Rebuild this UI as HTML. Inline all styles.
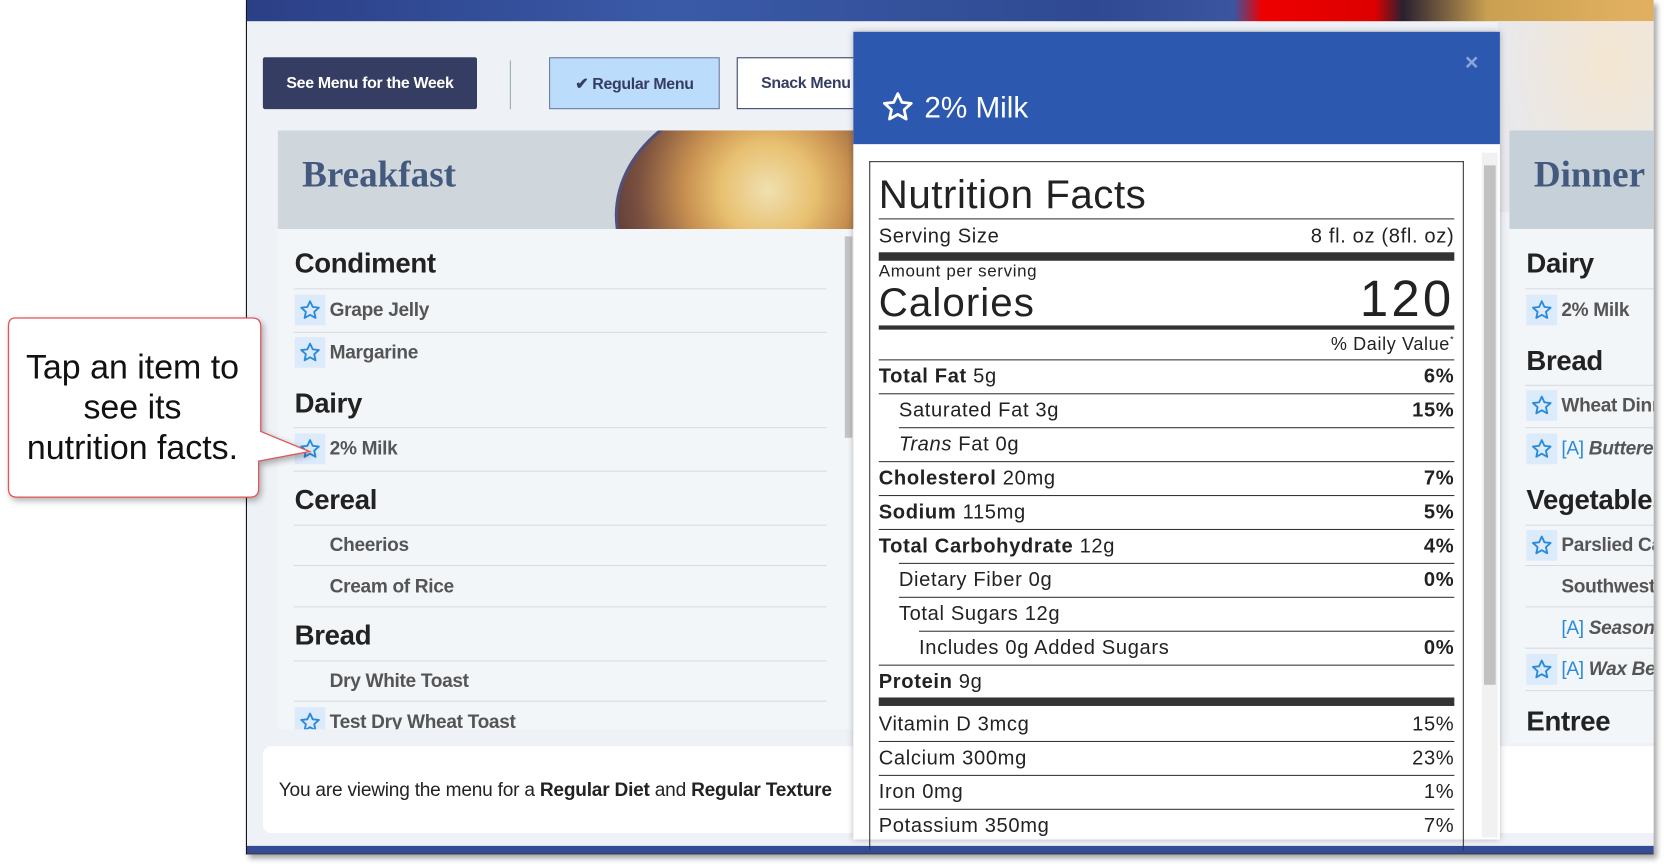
<!DOCTYPE html>
<html><head><meta charset="utf-8"><style>
*{box-sizing:border-box;margin:0;padding:0}
html,body{width:1664px;height:866px;overflow:hidden;background:#fff}
#w{position:absolute;left:0;top:0;width:1570px;height:817px;transform:scale(1.06);transform-origin:0 0;font-family:"Liberation Sans",sans-serif}
.abs{position:absolute}
.frame{left:232px;top:0;width:1328px;height:806px;background:#eef1f6;border-left:1.5px solid #111;border-bottom:1.5px solid #111;box-shadow:3px 4px 5px rgba(0,0,0,.35);overflow:hidden}
.btn{position:absolute;top:54px;height:49px;font-size:15px;font-weight:bold;display:flex;align-items:center;justify-content:center;letter-spacing:-.3px}
.card{background:#f3f6f9}
.h{position:absolute;left:16px;font-size:26px;font-weight:bold;color:#222;letter-spacing:-.3px}
.it{position:absolute;left:49px;font-size:18px;font-weight:bold;color:#555;letter-spacing:-.3px}
.ln{position:absolute;left:15px;right:42px;height:1px;background:#d6dbe2}
.st{position:absolute;left:16px;width:29px;height:29px;background:#dcebfb}
.st svg{position:absolute;left:4px;top:4px}
.nf{position:absolute;left:8px;right:8px;font-size:19px;color:#222;display:flex;justify-content:space-between;letter-spacing:.6px}
.tl{position:absolute;left:8px;right:8px;height:1px;background:#333}
</style></head><body><div id="w">
<div class="abs frame">
  <div class="abs" style="left:0;top:0;width:1330px;height:20px;background:linear-gradient(90deg,#2b3f86,#3a5aa8 30%,#2f4a92 60%,#3b55a0 70%,#e00 72%,#d00 80%,#2a2030 82%,#caa050 88%,#e0b060 98%)"></div>
  <div class="abs" style="left:0;top:798px;width:1330px;height:8px;background:#344c96"></div>
  <div class="abs" style="left:1180px;top:20px;width:150px;height:180px;background:radial-gradient(ellipse at 70% 20%,#f4e6d0,#e8e8ec 70%)"></div>
  <div class="btn" style="left:15px;width:202px;background:#363d63;color:#fff;border-radius:2px">See Menu for the Week</div>
  <div class="abs" style="left:248px;top:57px;width:1px;height:46px;background:#9aa"></div>
  <div class="btn" style="left:285px;width:161px;background:#bbdcfa;border:1px solid #6a7aa0;color:#363d63">✔ Regular Menu</div>
  <div class="btn" style="left:462px;width:140px;background:#fff;border:1px solid #363d63;color:#363d63;justify-content:flex-start;padding-left:22px">Snack Menu</div>

  <div class="abs card" style="left:29px;top:123px;width:560px;height:565px;overflow:hidden">
    <div class="abs" style="left:0;top:0;width:560px;height:93px;background:#cfd6dc;overflow:hidden">
      <div class="abs" style="left:318px;top:-40px;width:320px;height:240px;border-radius:50%;border:3px solid #50507a;background:radial-gradient(circle at 45% 40%,#f0e0b0 0,#e8c070 20%,#c89050 35%,#7a5040 55%,#5a3838 70%,#8a6048 90%)"></div>
    </div>
    <div class="abs" style="left:23px;top:22px;font-family:'Liberation Serif',serif;font-weight:bold;font-size:35px;color:#44597e">Breakfast</div>
    <div class="h" style="top:110px">Condiment</div><div class="ln" style="top:149px"></div>
    <div class="st" style="top:155px"><svg width="21" height="21" viewBox="0 0 24 24"><path d="M12 2.5l2.9 6.2 6.6.7-5 4.5 1.4 6.6L12 17.2l-5.9 3.3 1.4-6.6-5-4.5 6.6-.7z" fill="none" stroke="#2a8ad8" stroke-width="2" stroke-linejoin="round"/></svg></div>
    <div class="it" style="top:159px">Grape Jelly</div><div class="ln" style="top:190px"></div>
    <div class="st" style="top:195px"><svg width="21" height="21" viewBox="0 0 24 24"><path d="M12 2.5l2.9 6.2 6.6.7-5 4.5 1.4 6.6L12 17.2l-5.9 3.3 1.4-6.6-5-4.5 6.6-.7z" fill="none" stroke="#2a8ad8" stroke-width="2" stroke-linejoin="round"/></svg></div>
    <div class="it" style="top:199px">Margarine</div>
    <div class="h" style="top:242px">Dairy</div><div class="ln" style="top:280px"></div>
    <div class="st" style="top:286px"><svg width="21" height="21" viewBox="0 0 24 24"><path d="M12 2.5l2.9 6.2 6.6.7-5 4.5 1.4 6.6L12 17.2l-5.9 3.3 1.4-6.6-5-4.5 6.6-.7z" fill="none" stroke="#2a8ad8" stroke-width="2" stroke-linejoin="round"/></svg></div>
    <div class="it" style="top:290px">2% Milk</div><div class="ln" style="top:321px"></div>
    <div class="h" style="top:333px">Cereal</div><div class="ln" style="top:372px"></div>
    <div class="it" style="top:381px">Cheerios</div><div class="ln" style="top:410px"></div>
    <div class="it" style="top:420px">Cream of Rice</div><div class="ln" style="top:449px"></div>
    <div class="h" style="top:461px">Bread</div><div class="ln" style="top:500px"></div>
    <div class="it" style="top:509px">Dry White Toast</div><div class="ln" style="top:538px"></div>
    <div class="st" style="top:544px"><svg width="21" height="21" viewBox="0 0 24 24"><path d="M12 2.5l2.9 6.2 6.6.7-5 4.5 1.4 6.6L12 17.2l-5.9 3.3 1.4-6.6-5-4.5 6.6-.7z" fill="none" stroke="#2a8ad8" stroke-width="2" stroke-linejoin="round"/></svg></div>
    <div class="it" style="top:548px">Test Dry Wheat Toast</div>
    <div class="abs" style="left:535px;top:100px;width:7px;height:190px;background:#c4c4c4"></div>
  </div>

  <div class="abs card" style="left:1191px;top:123px;width:140px;height:578px;overflow:hidden">
    <div class="abs" style="left:0;top:0;width:140px;height:93px;background:#c6d0d9"></div>
    <div class="abs" style="left:23px;top:22px;font-family:'Liberation Serif',serif;font-weight:bold;font-size:35px;color:#44597e">Dinner</div>
    <div class="h" style="top:110px">Dairy</div><div class="ln" style="top:149px;right:0"></div>
    <div class="st" style="top:155px"><svg width="21" height="21" viewBox="0 0 24 24"><path d="M12 2.5l2.9 6.2 6.6.7-5 4.5 1.4 6.6L12 17.2l-5.9 3.3 1.4-6.6-5-4.5 6.6-.7z" fill="none" stroke="#2a8ad8" stroke-width="2" stroke-linejoin="round"/></svg></div>
    <div class="it" style="top:159px">2% Milk</div>
    <div class="h" style="top:202px">Bread</div><div class="ln" style="top:240px;right:0"></div>
    <div class="st" style="top:245px"><svg width="21" height="21" viewBox="0 0 24 24"><path d="M12 2.5l2.9 6.2 6.6.7-5 4.5 1.4 6.6L12 17.2l-5.9 3.3 1.4-6.6-5-4.5 6.6-.7z" fill="none" stroke="#2a8ad8" stroke-width="2" stroke-linejoin="round"/></svg></div>
    <div class="it" style="top:249px;white-space:nowrap">Wheat Dinner</div><div class="ln" style="top:280px;right:0"></div>
    <div class="st" style="top:286px"><svg width="21" height="21" viewBox="0 0 24 24"><path d="M12 2.5l2.9 6.2 6.6.7-5 4.5 1.4 6.6L12 17.2l-5.9 3.3 1.4-6.6-5-4.5 6.6-.7z" fill="none" stroke="#2a8ad8" stroke-width="2" stroke-linejoin="round"/></svg></div>
    <div class="it" style="top:290px;white-space:nowrap"><span style="color:#2a8ad8;font-weight:normal">[A]</span> <i>Buttered</i></div>
    <div class="h" style="top:333px">Vegetables</div><div class="ln" style="top:372px;right:0"></div>
    <div class="st" style="top:377px"><svg width="21" height="21" viewBox="0 0 24 24"><path d="M12 2.5l2.9 6.2 6.6.7-5 4.5 1.4 6.6L12 17.2l-5.9 3.3 1.4-6.6-5-4.5 6.6-.7z" fill="none" stroke="#2a8ad8" stroke-width="2" stroke-linejoin="round"/></svg></div>
    <div class="it" style="top:381px;white-space:nowrap">Parslied Carrots</div><div class="ln" style="top:410px;right:0"></div>
    <div class="it" style="top:420px;white-space:nowrap">Southwest</div><div class="ln" style="top:449px;right:0"></div>
    <div class="it" style="top:459px;white-space:nowrap"><span style="color:#2a8ad8;font-weight:normal">[A]</span> <i>Seasoned</i></div><div class="ln" style="top:488px;right:0"></div>
    <div class="st" style="top:494px"><svg width="21" height="21" viewBox="0 0 24 24"><path d="M12 2.5l2.9 6.2 6.6.7-5 4.5 1.4 6.6L12 17.2l-5.9 3.3 1.4-6.6-5-4.5 6.6-.7z" fill="none" stroke="#2a8ad8" stroke-width="2" stroke-linejoin="round"/></svg></div>
    <div class="it" style="top:498px;white-space:nowrap"><span style="color:#2a8ad8;font-weight:normal">[A]</span> <i>Wax Beans</i></div><div class="ln" style="top:528px;right:0"></div>
    <div class="h" style="top:542px">Entree</div>
  </div>

  <div class="abs" style="left:15px;top:704px;width:1320px;height:82px;background:#fff;border-radius:8px;font-size:18px;color:#222;padding:31px 0 0 15px;white-space:nowrap;letter-spacing:-.2px">You are viewing the menu for a <b>Regular Diet</b> and <b>Regular Texture</b></div>

  <!-- modal -->
  <div class="abs" style="left:572px;top:30px;width:610px;height:762px;background:#fff;box-shadow:0 0 6px rgba(0,0,0,.3)">
    <div class="abs" style="left:0;top:0;width:610px;height:106px;background:#2c58b0"></div>
    <div class="abs" style="left:577px;top:16px;color:#8aa4dc;font-size:22px;font-weight:bold">×</div>
    <svg class="abs" style="left:26px;top:55px" width="32" height="32" viewBox="0 0 24 24"><path d="M12 2.5l2.9 6.2 6.6.7-5 4.5 1.4 6.6L12 17.2l-5.9 3.3 1.4-6.6-5-4.5 6.6-.7z" fill="none" stroke="#fff" stroke-width="2" stroke-linejoin="round"/></svg>
    <div class="abs" style="left:67px;top:56px;color:#fff;font-size:28px">2% Milk</div>
    <div class="abs" style="left:593px;top:114px;width:15px;height:646px;background:#f1f1f1"></div>
    <div class="abs" style="left:595px;top:126px;width:11px;height:490px;background:#c1c1c1"></div>
    <div class="abs" style="left:15px;top:122px;width:561px;height:650px;border:1px solid #333;border-bottom:none;overflow:hidden">
      <div class="abs" style="left:8px;top:10px;font-size:38px;color:#222;letter-spacing:.5px">Nutrition Facts</div>
      <div class="tl" style="top:53px"></div>
      <div class="nf" style="top:60px"><span>Serving Size</span><span>8 fl. oz (8fl. oz)</span></div>
      <div class="tl" style="top:85px;height:8px"></div>
      <div class="nf" style="top:95px;font-size:16px"><span>Amount per serving</span></div>
      <div class="nf" style="top:112px;font-size:38px;letter-spacing:1px"><span>Calories</span><span style="font-size:48px;position:relative;top:-10px;letter-spacing:3px">120</span></div>
      <div class="tl" style="top:154px;height:4px"></div>
      <div class="nf" style="top:162px;font-size:17px;justify-content:flex-end"><span>% Daily Value<sup style="font-size:9px">*</sup></span></div>
      <div class="tl" style="top:186px"></div>
      <div class="nf" style="top:192px"><span><b>Total Fat</b> 5g</span><b>6%</b></div>
      <div class="tl" style="top:218px"></div>
      <div class="nf" style="top:224px;padding-left:19px"><span>Saturated Fat 3g</span><b>15%</b></div>
      <div class="tl" style="top:250px;left:27px"></div>
      <div class="nf" style="top:256px;padding-left:19px"><span><i>Trans</i> Fat 0g</span></div>
      <div class="tl" style="top:282px"></div>
      <div class="nf" style="top:288px"><span><b>Cholesterol</b> 20mg</span><b>7%</b></div>
      <div class="tl" style="top:314px"></div>
      <div class="nf" style="top:320px"><span><b>Sodium</b> 115mg</span><b>5%</b></div>
      <div class="tl" style="top:346px"></div>
      <div class="nf" style="top:352px"><span><b>Total Carbohydrate</b> 12g</span><b>4%</b></div>
      <div class="tl" style="top:378px;left:27px"></div>
      <div class="nf" style="top:384px;padding-left:19px"><span>Dietary Fiber 0g</span><b>0%</b></div>
      <div class="tl" style="top:410px;left:27px"></div>
      <div class="nf" style="top:416px;padding-left:19px"><span>Total Sugars 12g</span></div>
      <div class="tl" style="top:442px;left:46px"></div>
      <div class="nf" style="top:448px;padding-left:38px"><span>Includes 0g Added Sugars</span><b>0%</b></div>
      <div class="tl" style="top:474px"></div>
      <div class="nf" style="top:480px"><span><b>Protein</b> 9g</span></div>
      <div class="tl" style="top:505px;height:8px"></div>
      <div class="nf" style="top:520px"><span>Vitamin D 3mcg</span><span>15%</span></div>
      <div class="tl" style="top:546px"></div>
      <div class="nf" style="top:552px"><span>Calcium 300mg</span><span>23%</span></div>
      <div class="tl" style="top:578px"></div>
      <div class="nf" style="top:584px"><span>Iron 0mg</span><span>1%</span></div>
      <div class="tl" style="top:610px"></div>
      <div class="nf" style="top:616px"><span>Potassium 350mg</span><span>7%</span></div>
    </div>
  </div>
</div>

<!-- callout -->
<svg class="abs" style="left:0;top:295px" width="300" height="185">
  <path d="M14 5 H238 Q246 5 246 13 V112 L292 131 L244 140 V166 Q244 174 236 174 H16 Q8 174 8 166 V13 Q8 5 14 5 Z" fill="#fff" stroke="#e05555" stroke-width="1.2" style="filter:drop-shadow(2px 3px 3px rgba(0,0,0,.3))"/>
</svg>
<div class="abs" style="left:4px;top:327px;width:242px;text-align:center;font-size:32px;line-height:38px;color:#111;white-space:nowrap">Tap an item to<br>see its<br>nutrition facts.</div>
</div></body></html>
